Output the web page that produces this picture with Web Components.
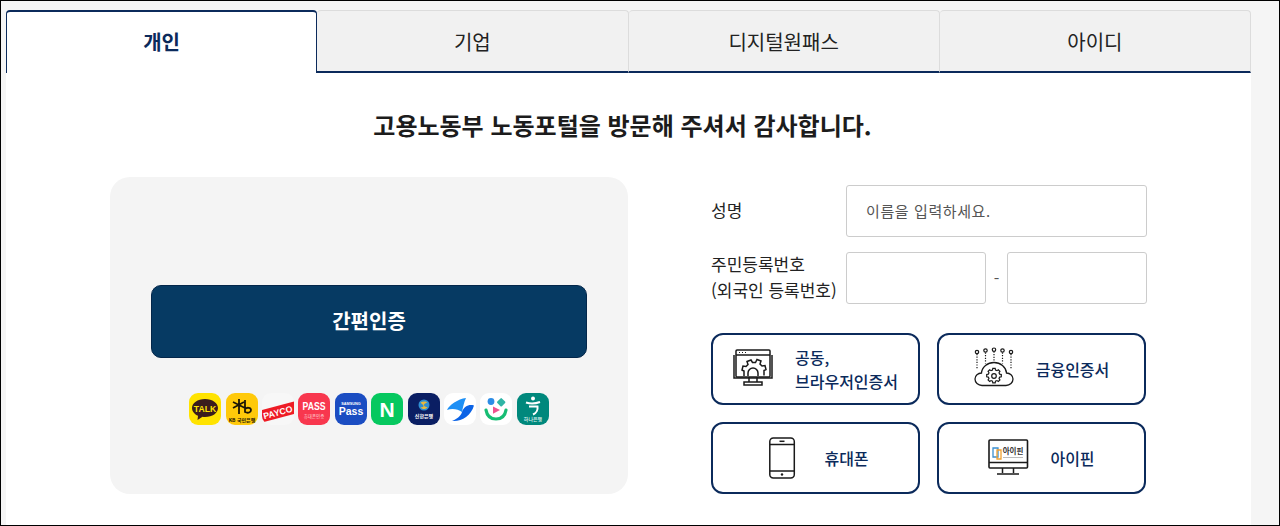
<!DOCTYPE html>
<html lang="ko">
<head>
<meta charset="utf-8">
<title>노동포털 로그인</title>
<style>
html, body { margin: 0; height: 100%; }
body { font-family: "Noto Sans CJK KR", "Noto Sans", sans-serif; background: #f5f5f5; }
</style>
</head>
<body>

<login-page>
  <login-tabs slot="tabs">
    <login-tab active>개인</login-tab>
    <login-tab>기업</login-tab>
    <login-tab>디지털원패스</login-tab>
    <login-tab>아이디</login-tab>
  </login-tabs>
  <span slot="title">고용노동부 노동포털을 방문해 주셔서 감사합니다.</span>

  <easy-auth slot="left">
    <app-icon name="kakao"></app-icon>
    <app-icon name="kb"></app-icon>
    <app-icon name="payco"></app-icon>
    <app-icon name="pass"></app-icon>
    <app-icon name="samsung"></app-icon>
    <app-icon name="naver"></app-icon>
    <app-icon name="shinhan"></app-icon>
    <app-icon name="toss"></app-icon>
    <app-icon name="banksalad"></app-icon>
    <app-icon name="hana"></app-icon>
  </easy-auth>

  <id-form slot="right"></id-form>
  <cert-grid slot="right">
    <cert-button icon="browser">공동,<br>브라우저인증서</cert-button>
    <cert-button icon="cloud">금융인증서</cert-button>
    <cert-button icon="phone">휴대폰</cert-button>
    <cert-button icon="ipin">아이핀</cert-button>
  </cert-grid>
</login-page>

<script>
class LoginPage extends HTMLElement {
    constructor() {
        super();
        this.attachShadow({ mode: "open" });
        this.shadowRoot.innerHTML = `
        <style>
            :host {
                display: flex;
                flex-direction: column;
                box-sizing: border-box;
                height: 526px;
                padding: 9px 28px 0 5px;
                border: 1px solid #000;
                background: #f5f5f5;
                overflow: hidden;
            }
            .panel { flex: 1; background: #fff; }
            h1 {
                margin: 0;
                padding-right: 12px;
                height: 104px;
                line-height: 104px;
                text-align: center;
                font-size: 24px;
                font-weight: 700;
                color: #1c1c1c;
            }
            .body { display: flex; gap: 83px; padding-left: 104px; }
            .right { display: flex; flex-direction: column; padding-top: 8px; width: 436px; }
        </style>
        <slot name="tabs"></slot>
        <div class="panel">
            <h1><slot name="title"></slot></h1>
            <div class="body">
                <slot name="left"></slot>
                <div class="right"><slot name="right"></slot></div>
            </div>
        </div>`;
    }
}
customElements.define("login-page", LoginPage);

class LoginTabs extends HTMLElement {
    constructor() {
        super();
        this.attachShadow({ mode: "open" });
        this.shadowRoot.innerHTML = `
        <style>
            :host { display: grid; grid-template-columns: repeat(4, 1fr); height: 63px; }
        </style>
        <slot></slot>`;
    }
}
customElements.define("login-tabs", LoginTabs);

class LoginTab extends HTMLElement {
    constructor() {
        super();
        this.attachShadow({ mode: "open" });
        this.shadowRoot.innerHTML = `
        <style>
            :host {
                display: flex;
                align-items: center;
                justify-content: center;
                box-sizing: border-box;
                padding-top: 1px;
                font-size: 20px;
                color: #222;
                background: #f1f1f1;
                border: 1px solid #dcdcdc;
                border-bottom: 2px solid #0b2a5b;
                border-left-width: 0;
                border-radius: 4px 4px 0 0;
            }
            :host([active]) {
                padding: 0 0 3px;
                font-weight: 700;
                color: #0b2a5b;
                background: #fff;
                border: 2px solid #0b2a5b;
                border-right-width: 1px;
                border-left-width: 1px;
                border-bottom: 0;
            }
        </style>
        <slot></slot>`;
    }
}
customElements.define("login-tab", LoginTab);

class EasyAuth extends HTMLElement {
    constructor() {
        super();
        this.attachShadow({ mode: "open" });
        this.shadowRoot.innerHTML = `
        <style>
            :host {
                display: flex;
                flex-direction: column;
                align-items: center;
                box-sizing: border-box;
                width: 518px;
                height: 317px;
                padding-top: 108px;
                background: #f4f4f4;
                border-radius: 20px;
            }
            .btn {
                display: flex;
                align-items: center;
                justify-content: center;
                box-sizing: border-box;
                width: 436px;
                height: 73px;
                padding-bottom: 2px;
                background: #063a63;
                border: 1px solid #03264a;
                border-radius: 10px;
                color: #fff;
                font-size: 20px;
                font-weight: 700;
            }
            .icons { display: flex; gap: 4.4px; margin-top: 35px; }
        </style>
        <div class="btn">간편인증</div>
        <div class="icons"><slot></slot></div>`;
    }
}
customElements.define("easy-auth", EasyAuth);

const APP_ICONS = {
    kakao: `<rect width="32" height="32" rx="9" fill="#ffe300"/>
        <path d="M16 6C8.500 6 3 10 3 15c0 3.400 2.500 6.200 6 7.800L8.500 27l5-3.200c.8.100 1.600.200 2.500.200 7.500 0 13-4 13-9S23.500 6 16 6z" fill="#3a1d1d"/>
        <text x="16" y="18.500" text-anchor="middle" font-size="8.600" font-weight="700" fill="#ffe300" font-family="Liberation Sans">TALK</text>`,
    kb: `<rect width="32" height="32" rx="9" fill="#ffc90a"/>
        <path d="M13 6v15M7 9l12 6M7 15l11-6M19 7v12c3 1.500 6 .5 6-2s-4-3-6-1" fill="none" stroke="#1c1606" stroke-width="1.800"/>
        <text x="16" y="29" text-anchor="middle" font-size="5" font-weight="700" fill="#1c1606">KB 국민은행</text>`,
    payco: `<defs><clipPath id="c"><rect width="32" height="32" rx="9"/></clipPath></defs>
        <g clip-path="url(#c)"><rect width="32" height="32" fill="#f7f7f7"/>
        <g transform="rotate(-15 16 20)"><rect x="-3" y="13" width="40" height="12" fill="#ee1c25"/>
        <text x="16" y="22.500" text-anchor="middle" font-size="8.800" font-weight="700" fill="#fff" font-family="Liberation Sans">PAYCO</text></g></g>`,
    pass: `<rect width="32" height="32" rx="9" fill="#f8374e"/>
        <text x="16" y="17" text-anchor="middle" font-size="10" font-weight="700" textLength="23" lengthAdjust="spacingAndGlyphs" fill="#fff" font-family="Liberation Sans">PASS</text>
        <text x="16" y="25" text-anchor="middle" font-size="4.500" fill="#ffd5da">휴대폰인증</text>`,
    samsung: `<rect width="32" height="32" rx="9" fill="#1b4dc2"/>
        <text x="16" y="12" text-anchor="middle" font-size="3.800" font-weight="700" fill="#fff" font-family="Liberation Sans">SAMSUNG</text>
        <text x="16" y="22" text-anchor="middle" font-size="10.500" font-weight="700" fill="#fff" font-family="Liberation Sans">Pass</text>`,
    naver: `<rect width="32" height="32" rx="9" fill="#06c85f"/>
        <text x="16" y="23.500" text-anchor="middle" font-size="21" font-weight="700" fill="#fff" font-family="Liberation Sans">N</text>`,
    shinhan: `<rect width="32" height="32" rx="9" fill="#0a1e63"/>
        <circle cx="16" cy="12" r="5.500" fill="#2f8fd3"/>
        <path d="M12.500 9.500c2-1.500 5.500-1.500 7 0-2 .5-4 1.500-3.500 3 .5 1.200 2.500 1.500 3.500 1.800-1.500 2.400-5.500 2.400-7 0 1.500 0 3.500-.3 3-1.600-.4-1.200-2.500-2-3-3.200z" fill="#e7b93c"/>
        <text x="16" y="25" text-anchor="middle" font-size="5" font-weight="700" fill="#fff">신한은행</text>`,
    toss: `<rect width="32" height="32" rx="9" fill="#fff"/>
        <path d="M22 5C14 6 5 12 3 17c5-2 11-1 15 2 1-5 2-10 4-14z" fill="#1e90f5"/>
        <path d="M30 12.500c-5-1.500-10 .5-12 6.500-1 4-5 7-10 9 9 1 19-5 22-15.500z" fill="#0b63e6"/>`,
    banksalad: `<rect width="32" height="32" rx="9" fill="#fff"/>
        <circle cx="11" cy="8.500" r="3.400" fill="#2d8de6"/>
        <rect x="18" y="6" width="6.500" height="6.500" rx="1" transform="rotate(45 21.200 9.200)" fill="#2fb5a5"/>
        <path d="M13 13.500l7 3.600-7 3.600z" fill="#f0528f"/>
        <path d="M6 17c1 6 5 9 10 9s9-3 10-9" fill="none" stroke="#17bd74" stroke-width="3.200" stroke-linecap="round"/>`,
    hana: `<rect width="32" height="32" rx="9" fill="#00887c"/>
        <circle cx="16" cy="5.500" r="2" fill="#fff"/>
        <path d="M9 9.500c4 1.400 9 1.400 14-.5M12 13.500h8.500c.5 3-1 6.500-4.500 8" fill="none" stroke="#fff" stroke-width="2"/>
        <text x="16" y="28" text-anchor="middle" font-size="5" font-weight="500" fill="#d9f1ee">하나은행</text>`
};

class AppIcon extends HTMLElement {
    constructor() {
        super();
        this.attachShadow({ mode: "open" });
    }

    connectedCallback() {
        var name = this.getAttribute("name");
        this.shadowRoot.innerHTML = `
        <style>
            :host { display: block; width: 32px; height: 32px; }
            svg { display: block; font-family: "Noto Sans CJK KR", sans-serif; }
        </style>
        <svg width="32" height="32" viewBox="0 0 32 32">${APP_ICONS[name]}</svg>`;
    }
}
customElements.define("app-icon", AppIcon);

class IdForm extends HTMLElement {
    constructor() {
        super();
        this.attachShadow({ mode: "open" });
        this.shadowRoot.innerHTML = `
        <style>
            :host {
                display: grid;
                grid-template-columns: 135px 140px 1fr 140px;
                grid-auto-rows: 52px;
                row-gap: 15px;
                align-items: center;
                font-size: 17px;
                line-height: 26px;
                color: #222;
            }
            .box {
                box-sizing: border-box;
                height: 100%;
                background: #fff;
                border: 1px solid #ccc;
                border-radius: 3px;
            }
            .wide {
                grid-column: 2 / 5;
                display: flex;
                align-items: center;
                padding: 0 19px;
                font-size: 15px;
                letter-spacing: 0.6px;
                color: #555;
            }
            .dash { text-align: center; font-size: 16px; color: #555; }
            .label { padding-bottom: 2px; white-space: nowrap; }
        </style>
        <div class="label">성명</div>
        <div class="box wide">이름을 입력하세요.</div>
        <div class="label">주민등록번호<br>(외국인 등록번호)</div>
        <div class="box"></div>
        <div class="dash">-</div>
        <div class="box"></div>`;
    }
}
customElements.define("id-form", IdForm);

class CertGrid extends HTMLElement {
    constructor() {
        super();
        this.attachShadow({ mode: "open" });
        this.shadowRoot.innerHTML = `
        <style>
            :host {
                display: grid;
                grid-template-columns: 209px 209px;
                grid-auto-rows: 72px;
                gap: 17px;
                margin-top: 29px;
            }
        </style>
        <slot></slot>`;
    }
}
customElements.define("cert-grid", CertGrid);

const CERT_ICONS = {
    browser: `<g fill="none" stroke="#1a1a1a" stroke-width="1.500">
        <rect x="3" y="2" width="34" height="27" rx="1"/>
        <path d="M3 7h34M1 7v23h38V7"/>
        <path d="M16 29v5h8v-5M11 37h18v-3H11z"/>
        <path d="M11 28v-5l-2-1 1-4 3 .5 2-2-1-3 4-1.500 1.500 2.500h3L24 11.500l4 1.500-1 3 2 2 3-.5 1 4-2 1v5"/>
        <path d="M15 28v-3a5 5 0 0 1 10 0v3"/></g>
        <path d="M6 4.500h1M9 4.500h1M12 4.500h1" stroke="#1a1a1a" stroke-width="1"/>`,
    cloud: `<g fill="none" stroke="#1a1a1a" stroke-width="1.200">
        <circle cx="3" cy="4" r="1.700"/><circle cx="11.500" cy="2.500" r="1.700"/><circle cx="20" cy="1.700" r="1.700"/><circle cx="28.500" cy="2.500" r="1.700"/><circle cx="37" cy="4" r="1.700"/>
        <path stroke-dasharray="1.200 1.400" d="M3 6v15M11.500 4.500v11M20 3.500v9M28.500 4.500v11M37 6v15"/>
        <path stroke-width="1.300" d="M8 37.500h24c4 0 7-3 7-6.500s-3-6-6.500-6c-.5-6-6-10.500-12.500-10.500S8 19 7.500 25C4 25 1 27.500 1 31s3 6.500 7 6.500z"/>
        <circle cx="20" cy="28" r="2.300"/>
        <path stroke-width="1.500" d="M18.500 20.500h3l.4 2 1.800.8 1.700-1.100 2 2-1.100 1.700.8 1.800 2 .4v2.800l-2 .4-.8 1.800 1.100 1.700-2 2-1.700-1.100-1.800.8-.4 2h-3l-.4-2-1.800-.8-1.700 1.100-2-2 1.100-1.700-.8-1.800-2-.4v-2.800l2-.4.8-1.800-1.100-1.700 2-2 1.700 1.100 1.800-.8z" transform="translate(4 4) scale(.8)"/>
        </g>`,
    phone: `<g fill="none" stroke="#1a1a1a" stroke-width="1.500">
        <rect x="7.800" y="1" width="24.500" height="40" rx="3.500"/>
        <path d="M8 7.500h24M8 34h24"/></g>
        <path d="M17.500 4.300h5" stroke="#1a1a1a" stroke-width="1.500"/>
        <circle cx="20" cy="37.500" r="1.200" fill="#1a1a1a"/>`,
    ipin: `<rect x="1" y="3" width="38.500" height="28" rx="1" fill="#fff" stroke="#1a1a1a" stroke-width="1.600"/>
        <path d="M1 25.500h38.500" stroke="#1a1a1a" stroke-width="1.400"/>
        <path d="M14.500 31v5M25.500 31v5M9 37h22" fill="none" stroke="#1a1a1a" stroke-width="1.500"/>
        <path d="M5 11h5v9H5z" fill="none" stroke="#3b8fd0" stroke-width="1.300"/>
        <path d="M9 13h4v9H9z" fill="none" stroke="#f0a030" stroke-width="1.300"/>
        <text x="25" y="17" text-anchor="middle" font-size="7.500" font-weight="700" fill="#333">아이핀</text>
        <path d="M15 20.500h20" stroke="#bbb" stroke-width="1"/>`
};

class CertButton extends HTMLElement {
    constructor() {
        super();
        this.attachShadow({ mode: "open" });
    }

    connectedCallback() {
        var icon = this.getAttribute("icon");
        this.shadowRoot.innerHTML = `
        <style>
            :host {
                display: flex;
                align-items: center;
                justify-content: center;
                gap: 22px;
                box-sizing: border-box;
                background: #fff;
                border: 2px solid #0b2a5b;
                border-radius: 12px;
                font-size: 16px;
                font-weight: 500;
                line-height: 24px;
                color: #0b2a5b;
                white-space: nowrap;
            }
            svg { display: block; flex: none; overflow: visible; font-family: "Noto Sans CJK KR", sans-serif; }
        </style>
        <svg width="40" height="42" viewBox="0 0 40 42">${CERT_ICONS[icon]}</svg>
        <div><slot></slot></div>`;
    }
}
customElements.define("cert-button", CertButton);
</script>
</body>
</html>
